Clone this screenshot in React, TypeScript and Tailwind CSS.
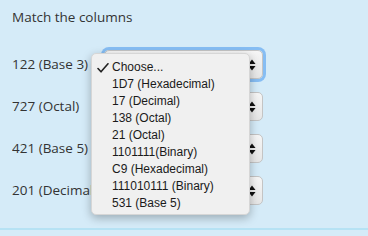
import React from "react";

const rows = ["122 (Base 3)", "727 (Octal)", "421 (Base 5)", "201 (Decimal)"];
const options = [
  "Choose...",
  "1D7 (Hexadecimal)",
  "17 (Decimal)",
  "138 (Octal)",
  "21 (Octal)",
  "1101111(Binary)",
  "C9 (Hexadecimal)",
  "111010111 (Binary)",
  "531 (Base 5)",
];

function Arrows() {
  return (
    <svg width="8" height="12" viewBox="0 0 8 12" className="block">
      <path d="M4 0.5 L7.5 5 L0.5 5 Z" fill="#111" />
      <path d="M4 11.5 L7.5 7 L0.5 7 Z" fill="#111" />
    </svg>
  );
}

export default function App() {
  return (
    <div
      className="relative w-[368px] h-[236px] overflow-hidden bg-[#d5ebf8] text-[#333]"
      style={{ fontFamily: '"Open Sans", "Liberation Sans", sans-serif' }}
    >
      <div className="px-3 pt-[7px] text-[13.5px] leading-[20px]">Match the columns</div>
      <div className="flex flex-col gap-[13px] pt-[23px] pl-3">
        {rows.map((r, i) => (
          <div key={r} className="flex items-center h-[29px]">
            <div className="w-[92px] text-[13.5px] whitespace-nowrap overflow-hidden">{r}</div>
            <div
              className={
                "w-[159px] h-[29px] rounded-[5px] border border-[#c4c4c4] bg-gradient-to-b from-[#f6f6f6] to-[#e6e6e6] flex items-center justify-end pr-[6px] " +
                (i === 0 ? "ring-[3px] ring-[#86bdf3]" : "")
              }
            >
              <Arrows />
            </div>
          </div>
        ))}
      </div>
      <div className="absolute left-0 right-0 top-[228px] h-[2px] bg-[#b6e2f4]" />
      <div
        className="absolute left-[91px] top-[53px] w-[159px] h-[162px] rounded-[5px] bg-[#f0f0f0] shadow-[0_3px_10px_rgba(0,0,0,0.28)] border border-[#d6d6d6] pt-[5px]"
        style={{ fontFamily: '"Liberation Sans", Arial, sans-serif' }}
      >
        {options.map((o, i) => (
          <div key={o} className="relative h-[17px] leading-[17px] pl-[20px] text-[12px] text-[#1a1a1a] whitespace-nowrap">
            {i === 0 && (
              <svg width="12" height="10" viewBox="0 0 12 10" className="absolute left-[5px] top-[4px]">
                <path d="M1 5.5 L4 8.8 L11 0.8" fill="none" stroke="#222" strokeWidth="1.6" strokeLinecap="round" strokeLinejoin="round" />
              </svg>
            )}
            {o}
          </div>
        ))}
      </div>
    </div>
  );
}
